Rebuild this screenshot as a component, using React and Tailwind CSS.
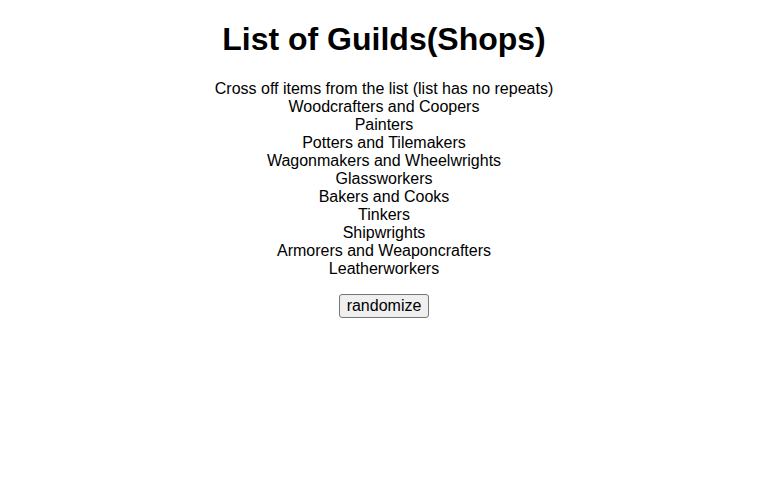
export default function App() {
  const guilds = [
    "Woodcrafters and Coopers",
    "Painters",
    "Potters and Tilemakers",
    "Wagonmakers and Wheelwrights",
    "Glassworkers",
    "Bakers and Cooks",
    "Tinkers",
    "Shipwrights",
    "Armorers and Weaponcrafters",
    "Leatherworkers",
  ];

  return (
    <div className="min-h-[480px] bg-white text-black text-center font-['Liberation_Sans',Arial,sans-serif] text-[16px] leading-[18px]">
      <h1 className="text-[32px] leading-[37px] font-bold pt-[21px] mb-[22px]">
        List of Guilds(Shops)
      </h1>
      <div>
        <div>Cross off items from the list (list has no repeats)</div>
        {guilds.map((g) => (
          <div key={g}>{g}</div>
        ))}
      </div>
      <div className="mt-[16px]">
        <button className="bg-[#efefef] border border-[#767676] rounded-[3px] px-[7px] py-[2px] leading-[18px] text-[16px] text-black">
          randomize
        </button>
      </div>
    </div>
  );
}
